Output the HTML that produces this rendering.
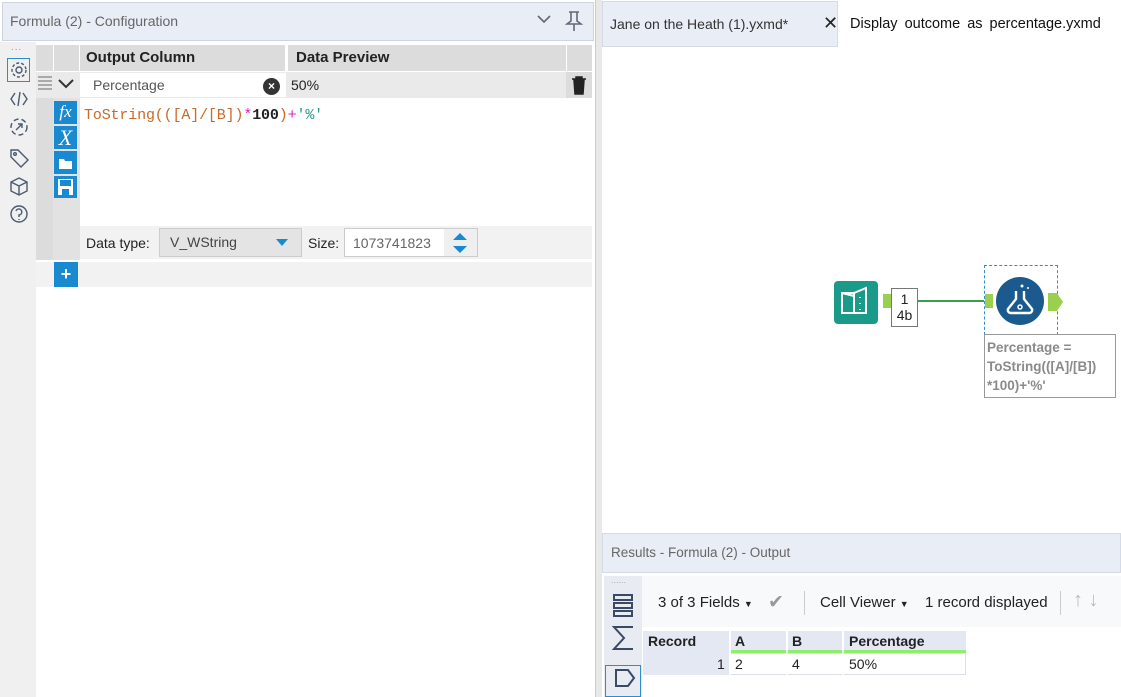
<!DOCTYPE html>
<html><head><style>
*{box-sizing:border-box;margin:0;padding:0}
body{width:1121px;height:697px;overflow:hidden;background:#fff;font-family:"Liberation Sans",sans-serif;font-size:14px;color:#222;position:relative}
.a{position:absolute}
</style></head><body>
<!-- left panel -->
<div class="a" style="left:0;top:0;width:596px;height:697px;background:#fff;border-right:1px solid #ccc"></div>
<div class="a" style="left:2px;top:2px;width:592px;height:39px;background:#e9edf6;border:1px solid #cfd5e0"></div>
<div class="a" style="left:10px;top:13px;font-size:14px;color:#666">Formula (2) - Configuration</div>
<svg class="a" style="left:537px;top:14px" width="14" height="10"><path d="M1 2l6 6 6-6" stroke="#667" stroke-width="1.6" fill="none"/></svg>
<svg class="a" style="left:565px;top:10px" width="18" height="22"><path d="M4 2h10M6 2v9l-4 3h14l-4-3V2M9 14v7" stroke="#667" stroke-width="1.6" fill="none"/></svg>
<div class="a" style="left:0;top:42px;width:36px;height:655px;background:#f0f0f0"></div>
<div class="a" style="left:11px;top:42px;font-size:10px;color:#999;letter-spacing:1px">...</div>
<div class="a" style="left:7px;top:58px;width:23px;height:24px;border:1px solid #2a8fd0"></div>
<svg class="a" style="left:8px;top:58px" width="22" height="170" fill="none" stroke="#4a5a70" stroke-width="1.4">
<circle cx="11" cy="12" r="3"/><circle cx="11" cy="12" r="7" stroke-dasharray="3 2"/>
<path d="M7 35l-4 6 4 6M15 35l4 6-4 6M12 34l-2 14"/>
<circle cx="11" cy="69" r="8" stroke-dasharray="5 3"/><path d="M8 72l6-6M10 66h4v4"/>
<path d="M3 92v7l10 10 7-7-10-10z"/><circle cx="7" cy="96" r="1.3"/>
<path d="M11 120l8 4v9l-8 4-8-4v-9zM3 124l8 4 8-4M11 128v9"/>
<circle cx="11" cy="156" r="8"/><path d="M8 153a3 3 0 1 1 3 4v2M11 161v1"/>
</svg>
<!-- grid -->
<div class="a" style="left:36px;top:45px;width:556px;height:26px;background:#dcdcdc"></div>
<div class="a" style="left:53px;top:45px;width:1px;height:215px;background:#fff"></div>
<div class="a" style="left:79px;top:45px;width:1px;height:26px;background:#fff"></div>
<div class="a" style="left:285px;top:45px;width:3px;height:26px;background:#fff"></div>
<div class="a" style="left:566px;top:45px;width:1px;height:26px;background:#fff"></div>
<div class="a" style="left:86px;top:49px;font-weight:bold;font-size:15px">Output Column</div>
<div class="a" style="left:296px;top:49px;font-weight:bold;font-size:15px">Data Preview</div>
<div class="a" style="left:36px;top:72px;width:556px;height:26px;background:#eaeaea"></div>
<div class="a" style="left:38px;top:76px;width:14px;height:16px;background:repeating-linear-gradient(#aaa 0 2px,transparent 2px 4px)"></div>
<svg class="a" style="left:58px;top:79px" width="16" height="10"><path d="M1 1l7 7 7-7" stroke="#333" stroke-width="2" fill="none"/></svg>
<div class="a" style="left:80px;top:73px;width:206px;height:24px;background:#fff"></div>
<div class="a" style="left:93px;top:77px;color:#555">Percentage</div>
<div class="a" style="left:263px;top:78px;width:17px;height:17px;border-radius:50%;background:#333;color:#fff;font-size:12px;line-height:17px;text-align:center;font-weight:bold">×</div>
<div class="a" style="left:291px;top:77px">50%</div>
<div class="a" style="left:566px;top:72px;width:26px;height:26px;background:#dcdcdc"></div>
<svg class="a" style="left:571px;top:75px" width="16" height="20"><path d="M1 4h14M5 4V2h6v2M3 5l1 14h8l1-14z" stroke="#222" stroke-width="1.5" fill="#222"/></svg>
<div class="a" style="left:36px;top:98px;width:17px;height:162px;background:#dcdcdc"></div>
<div class="a" style="left:53px;top:98px;width:27px;height:162px;background:#e2e2e2"></div>
<div class="a" style="left:54px;top:101px;width:23px;height:23px;background:#1a8ad0;color:#fff;font-family:'Liberation Serif';font-style:italic;font-size:17px;text-align:center;line-height:21px">fx</div>
<div class="a" style="left:54px;top:126px;width:23px;height:23px;background:#1a8ad0;color:#fff;font-family:'Liberation Serif';font-style:italic;font-size:22px;text-align:center;line-height:23px">X</div>
<div class="a" style="left:54px;top:151px;width:23px;height:23px;background:#1a8ad0"></div>
<svg class="a" style="left:56px;top:154px" width="19" height="17"><path d="M3 5h5l1 2h7v8H3z" fill="#fff"/></svg>
<div class="a" style="left:54px;top:176px;width:23px;height:22px;background:#1a8ad0"></div>
<svg class="a" style="left:57px;top:178px" width="17" height="18"><rect x="1" y="1" width="15" height="16" fill="#fff"/><rect x="3" y="2" width="11" height="6" fill="#1a8ad0"/><rect x="5" y="11" width="7" height="6" fill="#1a8ad0"/></svg>
<div class="a" style="left:84px;top:107px;font-family:'Liberation Mono',monospace;font-size:15px;letter-spacing:-0.15px;color:#c76a2a">ToString(([A]/[B])<span style="color:#e020c0">*</span><b style="color:#222">100</b>)<span style="color:#e020c0">+</span><span style="color:#2a9a8a">'%'</span></div>
<div class="a" style="left:80px;top:226px;width:512px;height:33px;background:#f2f2f2"></div>
<div class="a" style="left:86px;top:235px">Data type:</div>
<div class="a" style="left:159px;top:228px;width:143px;height:29px;background:#e4e4e4;border:1px solid #ccc"></div>
<div class="a" style="left:170px;top:234px;color:#444">V_WString</div>
<svg class="a" style="left:276px;top:239px" width="12" height="7"><path d="M0 0h12L6 7z" fill="#1a8ad0"/></svg>
<div class="a" style="left:308px;top:235px">Size:</div>
<div class="a" style="left:344px;top:228px;width:134px;height:29px;background:#fff;border:1px solid #ccc"></div>
<div class="a" style="left:444px;top:229px;width:33px;height:27px;background:#efefef"></div>
<div class="a" style="left:353px;top:235px;color:#666">1073741823</div>
<svg class="a" style="left:452px;top:232px" width="16" height="22"><path d="M1 8l7-7 7 7zM1 14l7 7 7-7z" fill="#1a8ad0"/></svg>
<div class="a" style="left:36px;top:262px;width:556px;height:25px;background:#f2f2f2"></div>
<div class="a" style="left:54px;top:262px;width:24px;height:25px;background:#1a8ad0;color:#fff;font-weight:bold;font-size:18px;text-align:center;line-height:24px">+</div>
<!-- splitter -->
<div class="a" style="left:596px;top:0;width:6px;height:697px;background:#e8e8e8"></div>
<!-- tabs -->
<div class="a" style="left:602px;top:0;width:519px;height:48px;background:#fff"></div>
<div class="a" style="left:602px;top:1px;width:236px;height:46px;background:#e9edf6;border:1px solid #d5dbe6"></div>
<div class="a" style="left:610px;top:16px;color:#333">Jane on the Heath (1).yxmd*</div>
<div class="a" style="left:823px;top:13px;font-size:18px">✕</div>
<div class="a" style="left:850px;top:16px;color:#111;font-size:14.5px;word-spacing:3px">Display outcome as percentage.yxmd</div>
<!-- canvas tools -->
<div class="a" style="left:834px;top:281px;width:44px;height:43px;background:#1a9b8a;border-radius:4px"></div>
<svg class="a" style="left:838px;top:285px" width="36" height="34" fill="none" stroke="#fff" stroke-width="2"><path d="M4 8v20h12V8zM16 8l12-5v25H16M22 12v1M22 18v1M22 24v1M4 8l12 3"/></svg>
<div class="a" style="left:883px;top:294px;width:8px;height:14px;background:#9bd04e"></div>
<div class="a" style="left:891px;top:288px;width:27px;height:39px;background:#fff;border:1px solid #777;font-size:14px;text-align:center;line-height:16px;padding-top:2px">1<br>4b</div>
<div class="a" style="left:918px;top:300px;width:66px;height:2px;background:#3aa050"></div>
<div class="a" style="left:984px;top:265px;width:74px;height:70px;border:1px dashed #2a8fd0"></div>
<div class="a" style="left:985px;top:294px;width:8px;height:14px;background:#9bd04e"></div>
<div class="a" style="left:996px;top:277px;width:48px;height:48px;border-radius:50%;background:#1b5a8e"></div>
<svg class="a" style="left:1004px;top:283px" width="32" height="36" fill="none" stroke="#fff" stroke-width="2.4"><path d="M12 8v8l-8 10a3 3 0 0 0 3 4h18a3 3 0 0 0 3-4l-8-10V8"/><circle cx="16" cy="24" r="2" stroke-width="1.5"/><circle cx="18" cy="3" r="1.5" fill="#fff" stroke="none"/><circle cx="24" cy="5" r="1" fill="#fff" stroke="none"/></svg>
<svg class="a" style="left:1048px;top:293px" width="16" height="18"><path d="M0 0h9l6 9-6 9H0z" fill="#9bd04e"/></svg>
<div class="a" style="left:984px;top:334px;width:132px;height:64px;background:#fff;border:1px solid #999"></div>
<div class="a" style="left:987px;top:338px;color:#8a8a8a;font-weight:bold;font-size:13.5px;line-height:19px">Percentage =<br>ToString(([A]/[B])<br>*100)+'%'</div>
<!-- results -->
<div class="a" style="left:602px;top:528px;width:519px;height:169px;background:#fff"></div>
<div class="a" style="left:602px;top:533px;width:519px;height:40px;background:#e9edf6;border:1px solid #d5dbe6"></div>
<div class="a" style="left:611px;top:545px;color:#666;font-size:13.5px">Results - Formula (2) - Output</div>
<div class="a" style="left:604px;top:576px;width:38px;height:121px;background:#e8ebf2"></div>
<div class="a" style="left:642px;top:576px;width:479px;height:51px;background:#f8f9fb"></div>
<div class="a" style="left:611px;top:575px;font-size:9px;color:#aaa">......</div>
<svg class="a" style="left:606px;top:592px" width="36" height="105" fill="none" stroke="#3a4a66" stroke-width="2">
<rect x="8" y="3" width="18" height="5"/><rect x="8" y="11" width="18" height="5"/><rect x="8" y="19" width="18" height="5"/>
<path d="M27 35H8l10 11-10 11h19"/>
<path d="M10 78h12l6 8-6 8H10z"/></svg>
<div class="a" style="left:605px;top:665px;width:36px;height:32px;border:1px solid #2a8fd0"></div>
<div class="a" style="left:658px;top:594px;font-size:15px">3 of 3 Fields <span style="font-size:9px">▼</span></div>
<div class="a" style="left:768px;top:591px;color:#999;font-size:19px">✔</div>
<div class="a" style="left:804px;top:591px;width:1px;height:24px;background:#ccc"></div>
<div class="a" style="left:820px;top:594px;font-size:15px">Cell Viewer <span style="font-size:9px">▼</span></div>
<div class="a" style="left:925px;top:594px;font-size:15px">1 record displayed</div>
<div class="a" style="left:1060px;top:591px;width:1px;height:24px;background:#ccc"></div>
<div class="a" style="left:1073px;top:589px;color:#bbb;font-size:20px">↑ ↓</div>
<div class="a" style="left:643px;top:631px;width:323px;height:22px;background:#e4e8f2"></div>
<div class="a" style="left:731px;top:650px;width:235px;height:3px;background:linear-gradient(90deg,#8ef06a 0 55px,#fff 55px 57px,#8ef06a 57px 111px,#fff 111px 113px,#8ef06a 113px)"></div>
<div class="a" style="left:643px;top:653px;width:323px;height:22px;background:#fff;border:1px solid #dde"></div>
<div class="a" style="left:729px;top:631px;width:2px;height:44px;background:#fff"></div>
<div class="a" style="left:786px;top:631px;width:2px;height:44px;background:#fff"></div>
<div class="a" style="left:842px;top:631px;width:2px;height:44px;background:#fff"></div>
<div class="a" style="left:643px;top:653px;width:86px;height:22px;background:#e4e8f2"></div>
<div class="a" style="left:648px;top:633px;font-weight:bold;font-size:14px">Record</div>
<div class="a" style="left:735px;top:633px;font-weight:bold;font-size:14px">A</div>
<div class="a" style="left:792px;top:633px;font-weight:bold;font-size:14px">B</div>
<div class="a" style="left:849px;top:633px;font-weight:bold;font-size:14px">Percentage</div>
<div class="a" style="left:717px;top:656px;font-size:14px">1</div>
<div class="a" style="left:735px;top:656px;font-size:14px">2</div>
<div class="a" style="left:792px;top:656px;font-size:14px">4</div>
<div class="a" style="left:849px;top:656px;font-size:14px">50%</div>
</body></html>
